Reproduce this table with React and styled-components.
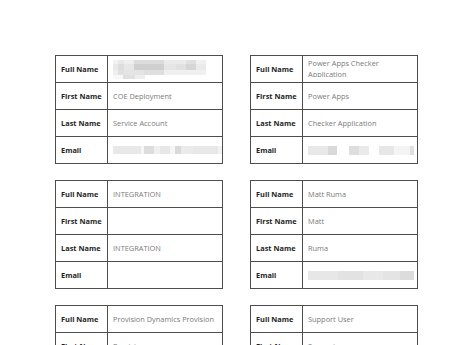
import React from "react";
import styled, { createGlobalStyle } from "styled-components";

const Global = createGlobalStyle`
  html, body { margin: 0; padding: 0; background: #ffffff; overflow: hidden; }
  body { font-family: "Open Sans", "Noto Sans", sans-serif; }
`;

const Page = styled.div`
  display: grid;
  grid-template-columns: 168px 168px;
  column-gap: 27px;
  row-gap: 16px;
  padding: 55px 0 0 55px;
`;

const Table = styled.div`
  box-sizing: border-box;
  width: 168px;
  border: 1px solid #4d4d4d;
  background: #fff;
`;

const Row = styled.div`
  display: grid;
  grid-template-columns: 52px 1fr;
  height: 26px;
  & + & { border-top: 1px solid #4d4d4d; }
`;

const Label = styled.div`
  display: flex;
  align-items: center;
  padding-left: 5px;
  border-right: 1px solid #4d4d4d;
  font-size: 7.4px;
  font-weight: 700;
  color: #1e1e1e;
  white-space: nowrap;
`;

const Value = styled.div`
  display: flex;
  align-items: center;
  padding: 0 5px;
  overflow: hidden;
`;

const TextValue = styled(Value)`
  clip-path: inset(0 0 5px 0);
`;

const ValueText = styled.div`
  font-size: 7.4px;
  line-height: 11px;
  color: #7a7a7a;
`;

const Mosaic = styled.div`
  display: flex;
  flex-direction: column;
`;

const MosaicRow = styled.div`
  display: flex;
  height: ${(p) => p.$h}px;
`;

const Tile = styled.span`
  display: block;
  width: ${(p) => p.$w}px;
  background: ${(p) => p.$c};
`;

const Blurred = ({ rows }) => (
  <Mosaic>
    {rows.map((r, i) => (
      <MosaicRow key={i} $h={r.h}>
        {r.tiles.map(([w, c], j) => (
          <Tile key={j} $w={w} $c={c} />
        ))}
      </MosaicRow>
    ))}
  </Mosaic>
);

const blur1Name = [
  { h: 4, tiles: [[5, "#f2f2f2"], [6, "#e8e8e8"], [10, "#efefef"], [30, "#dcdcdc"], [22, "#ebebeb"], [10, "#e0e0e0"], [10, "#f0f0f0"]] },
  { h: 6, tiles: [[5, "#e9e9e9"], [6, "#dddddd"], [10, "#e7e7e7"], [30, "#cfcfcf"], [12, "#e6e6e6"], [10, "#e1e1e1"], [10, "#d6d6d6"], [10, "#eaeaea"]] },
  { h: 5, tiles: [[5, "#eeeeee"], [6, "#e1e1e1"], [20, "#e4e4e4"], [20, "#dfdfdf"], [42, "#f0f0f0"]] },
  { h: 4, tiles: [[10, "#f8f8f8"], [12, "#e0e0e0"], [10, "#eeeeee"]] },
];

const blur1Email = [
  { h: 8, tiles: [[28, "#e8e8e8"], [3, "#f6f6f6"], [10, "#dddddd"], [6, "#efefef"], [10, "#e7e7e7"], [5, "#f6f6f6"], [6, "#d9d9d9"], [12, "#ebebeb"], [25, "#e8e8e8"], [6, "#f2f2f2"]] },
];

const blur2Email = [
  { h: 9, tiles: [[20, "#e8e8e8"], [9, "#d9d9d9"], [12, "#ffffff"], [10, "#dedede"], [10, "#eaeaea"], [10, "#ffffff"], [15, "#e7e7e7"], [16, "#f4f4f4"], [4, "#e0e0e0"]] },
];

const blur4Email = [
  { h: 9, tiles: [[30, "#e7e7e7"], [25, "#e2e2e2"], [20, "#e8e8e8"], [17, "#e4e4e4"], [14, "#dcdcdc"]] },
];

const tables = [
  { full: <Blurred rows={blur1Name} />, first: "COE Deployment", last: "Service Account", email: <Blurred rows={blur1Email} /> },
  { full: "Power Apps Checker Application", first: "Power Apps", last: "Checker Application", email: <Blurred rows={blur2Email} /> },
  { full: "INTEGRATION", first: "", last: "INTEGRATION", email: "" },
  { full: "Matt Ruma", first: "Matt", last: "Ruma", email: <Blurred rows={blur4Email} /> },
  { full: "Provision Dynamics Provision", first: "Provision", last: "", email: "" },
  { full: "Support User", first: "Support", last: "", email: "" },
];

const Cell = ({ v }) =>
  typeof v === "string" ? (
    <TextValue><ValueText>{v}</ValueText></TextValue>
  ) : (
    <Value>{v}</Value>
  );

export default function App() {
  return (
    <>
      <Global />
      <Page>
        {tables.map((t, i) => (
          <Table key={i}>
            <Row><Label>Full Name</Label><Cell v={t.full} /></Row>
            <Row><Label>First Name</Label><Cell v={t.first} /></Row>
            <Row><Label>Last Name</Label><Cell v={t.last} /></Row>
            <Row><Label>Email</Label><Cell v={t.email} /></Row>
          </Table>
        ))}
      </Page>
    </>
  );
}
